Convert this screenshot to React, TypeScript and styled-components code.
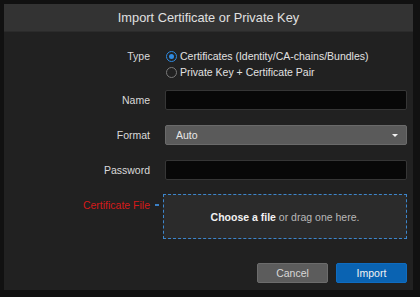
import React, { FC, ReactNode } from 'react'
import styled, { createGlobalStyle } from 'styled-components'

const GlobalStyle = createGlobalStyle`
  html, body {
    margin: 0;
    padding: 0;
    background: #111111;
  }
  body {
    font-family: "Liberation Sans", Arial, sans-serif;
    font-size: 10.5px;
    color: #d8d8d8;
  }
`

const Page = styled.div`
  padding: 4px 7px 7px 4px;
  width: 420px;
  height: 297px;
  box-sizing: border-box;
`

const Dialog = styled.div`
  width: 409px;
  height: 286px;
  background: #212121;
  display: flex;
  flex-direction: column;
`

const Header = styled.div`
  height: 28px;
  background: #333333;
  border-bottom: 1px solid #2b2b2b;
  display: flex;
  align-items: center;
  justify-content: center;
  font-size: 12.8px;
  color: #e0e0e0;
  box-sizing: border-box;
`

const Body = styled.div`
  flex: 1;
  display: flex;
  flex-direction: column;
  padding: 16px 6px 0 0;
`

const Row = styled.div<{ $gap?: number; $align?: string }>`
  display: grid;
  grid-template-columns: 146px 1fr;
  column-gap: 15px;
  align-items: ${p => p.$align || 'center'};
  margin-bottom: ${p => (p.$gap ?? 15)}px;
`

const Label = styled.div<{ $error?: boolean; $top?: number }>`
  text-align: right;
  color: ${p => (p.$error ? '#d41a1a' : '#dadada')};
  padding-top: ${p => p.$top || 0}px;
  display: flex;
  justify-content: flex-end;
  align-items: center;
  gap: 5px;
`

const RequiredMark = styled.span`
  display: inline-block;
  width: 4px;
  height: 2px;
  background: #3a7fc4;
  margin-right: -9px;
`

const RadioGroup = styled.div`
  display: flex;
  flex-direction: column;
`

const RadioLine = styled.label`
  display: flex;
  align-items: center;
  height: 16px;
  gap: 3px;
  color: #e2e2e2;
`

const RadioCircle = styled.span<{ $checked?: boolean }>`
  width: 9px;
  height: 9px;
  border-radius: 50%;
  border: 1px solid ${p => (p.$checked ? '#2f8ae0' : '#7a7a7a')};
  display: flex;
  align-items: center;
  justify-content: center;
  margin-left: 1px;
  &::after {
    content: '';
    width: 5px;
    height: 5px;
    border-radius: 50%;
    background: ${p => (p.$checked ? '#2f8ae0' : 'transparent')};
  }
`

const TextInput = styled.div`
  height: 20px;
  box-sizing: border-box;
  background: #080808;
  border: 1px solid #363636;
  border-radius: 2px;
`

const Select = styled.div`
  height: 20px;
  box-sizing: border-box;
  background: #5a5a5a;
  border: 1px solid #6a6a6a;
  border-radius: 2px;
  display: flex;
  align-items: center;
  justify-content: space-between;
  padding: 0 8px 0 10px;
  color: #e8e8e8;
`

const Caret = styled.span`
  width: 0;
  height: 0;
  border-left: 3px solid transparent;
  border-right: 3px solid transparent;
  border-top: 3px solid #f2f2f2;
`

const DropZone = styled.div`
  height: 45px;
  box-sizing: border-box;
  margin-left: -2px;
  background: #2b2b2b;
  border: 1px dashed #3d86cc;
  display: flex;
  align-items: center;
  justify-content: center;
  color: #b8b8b8;
  b {
    color: #f2f2f2;
  }
`

const Footer = styled.div`
  display: flex;
  justify-content: flex-end;
  gap: 8px;
  padding: 24px 0 0 0;
`

const Button = styled.button<{ $primary?: boolean }>`
  width: 71px;
  height: 20px;
  font-family: inherit;
  font-size: 10.5px;
  border-radius: 2px;
  color: ${p => (p.$primary ? '#f2f2f2' : '#d8d8d8')};
  background: ${p => (p.$primary ? '#0a63b2' : '#5c5c5c')};
  border: 1px solid ${p => (p.$primary ? '#0f6cc0' : '#6c6c6c')};
`

interface FieldProps {
  label: string
  error?: boolean
  required?: boolean
  top?: number
  gap?: number
  align?: string
  children: ReactNode
}

const Field: FC<FieldProps> = ({ label, error, required, top, gap, align, children }) => (
  <Row $gap={gap} $align={align}>
    <Label $error={error} $top={top}>
      {label}
      {required && <RequiredMark />}
    </Label>
    {children}
  </Row>
)

export default function App() {
  return (
    <Page>
      <GlobalStyle />
      <Dialog>
        <Header>Import Certificate or Private Key</Header>
        <Body>
          <Field label='Type' align='start' top={2} gap={10}>
            <RadioGroup>
              <RadioLine><RadioCircle $checked />Certificates (Identity/CA-chains/Bundles)</RadioLine>
              <RadioLine><RadioCircle />Private Key + Certificate Pair</RadioLine>
            </RadioGroup>
          </Field>
          <Field label='Name'>
            <TextInput />
          </Field>
          <Field label='Format'>
            <Select>Auto<Caret /></Select>
          </Field>
          <Field label='Password' gap={14}>
            <TextInput />
          </Field>
          <Field label='Certificate File' error required align='start' top={5} gap={0}>
            <DropZone><b>Choose a file</b>&nbsp;or drag one here.</DropZone>
          </Field>
          <Footer>
            <Button>Cancel</Button>
            <Button $primary>Import</Button>
          </Footer>
        </Body>
      </Dialog>
    </Page>
  )
}
